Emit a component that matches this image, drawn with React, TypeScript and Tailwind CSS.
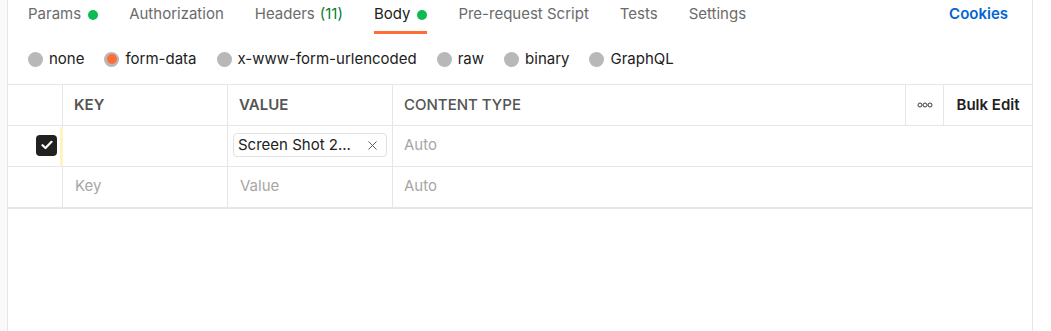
import { X } from "lucide-react";

const tabs = [
  { label: "Params", dot: true },
  { label: "Authorization" },
  { label: "Headers", count: "(11)" },
  { label: "Body", dot: true, active: true },
  { label: "Pre-request Script" },
  { label: "Tests" },
  { label: "Settings" },
];

const bodyTypes = ["none", "form-data", "x-www-form-urlencoded", "raw", "binary", "GraphQL"];

const Radio = ({ checked }: { checked?: boolean }) =>
  checked ? (
    <span className="flex h-[15px] w-[15px] items-center justify-center rounded-full bg-[#b8b8b8]">
      <span className="h-[10px] w-[10px] rounded-full bg-[#ff6c37]" />
    </span>
  ) : (
    <span className="h-[15px] w-[15px] rounded-full bg-[#b8b8b8]" />
  );

const MoreDots = () => (
  <svg width="16" height="6" viewBox="0 0 16 6" fill="none" stroke="#3a3a3a" strokeWidth="1">
    <circle cx="3" cy="3" r="2" />
    <circle cx="8" cy="3" r="2" />
    <circle cx="13" cy="3" r="2" />
  </svg>
);

export default function App() {
  return (
    <div className="flex h-[331px] w-[1051px] bg-white text-[15px] text-[#212121]" style={{ fontFamily: "Inter, 'Noto Sans', sans-serif" }}>
      {/* left gutter */}
      <div className="w-2 shrink-0 border-r border-[#e6e6e6] bg-[#f9f9f9]" />

      <div className="flex w-[1025px] shrink-0 flex-col border-r border-[#e6e6e6]">
        {/* Tabs */}
        <div className="flex h-[34px] items-start pl-5 pr-[24px]">
          <div className="flex gap-[31px]">
            {tabs.map((t) => (
              <div key={t.label} className="relative flex h-[34px] items-start pt-[4px]">
                <span className={`leading-5 ${t.active ? "text-[#212121]" : "text-[#6b6b6b]"}`}>{t.label}</span>
                {t.count && <span className="ml-[5px] leading-5 text-[#0a7b33]">{t.count}</span>}
                {t.dot && <span className="ml-[7px] mt-[6px] h-[10px] w-[10px] rounded-full bg-[#0cbb52]" />}
                {t.active && <span className="absolute bottom-0 left-0 right-0 h-[3px] bg-[#ff6c37]" />}
              </div>
            ))}
          </div>
          <span className="ml-auto pt-[4px] font-semibold leading-5 text-[#0265d2]">Cookies</span>
        </div>

        {/* Body types */}
        <div className="flex h-[50px] items-center gap-[20px] pl-5">
          {bodyTypes.map((b) => (
            <label key={b} className="flex items-center gap-[6px]">
              <Radio checked={b === "form-data"} />
              <span className="leading-5">{b}</span>
            </label>
          ))}
        </div>

        {/* Table */}
        <div className="border-t border-b-2 border-[#e6e6e6]">
          <div className="flex h-[41px] border-b border-[#e6e6e6] text-[#545454]">
            <div className="w-[55px] border-r border-[#e6e6e6]" />
            <div className="flex w-[165px] items-center border-r border-[#e6e6e6] pl-[11px] font-semibold">KEY</div>
            <div className="flex w-[165px] items-center border-r border-[#e6e6e6] pl-[11px] font-semibold">VALUE</div>
            <div className="flex flex-1 items-center border-r border-[#e6e6e6] pl-[11px] font-medium">CONTENT TYPE</div>
            <div className="flex w-[38px] items-center justify-center border-r border-[#e6e6e6]">
              <MoreDots />
            </div>
            <div className="flex w-[88px] items-center justify-center font-semibold text-[#212121]">Bulk Edit</div>
          </div>

          <div className="flex h-[41px] border-b border-[#e6e6e6]">
            <div className="flex w-[55px] items-center justify-end border-r border-[#e6e6e6]">
              <span className="mb-[2px] flex h-[21px] w-[21px] items-center justify-center rounded-[4px] bg-[#212121]">
                <svg width="12" height="10" viewBox="0 0 12 10" fill="none" stroke="white" strokeWidth="2.2" strokeLinecap="round" strokeLinejoin="round">
                  <path d="M1.5 5.2 4.5 8 10.5 1.8" />
                </svg>
              </span>
              <span className="ml-[3px] mr-[-1px] h-[39px] w-[3px] bg-[#fff3c4]" />
            </div>
            <div className="w-[165px] border-r border-[#e6e6e6]" />
            <div className="flex w-[165px] items-center border-r border-[#e6e6e6] px-[5px] pb-[2px]">
              <div className="flex h-[24px] w-full items-center justify-between rounded-[4px] border border-[#e0e0e0] pl-[4px] pr-[6px]">
                <span className="leading-5">Screen Shot 2...</span>
                <X size={15} strokeWidth={1.5} className="text-[#555]" />
              </div>
            </div>
            <div className="flex flex-1 items-center pb-[2px] pl-[11px] text-[#a6a6a6]">Auto</div>
          </div>

          <div className="flex h-[40px] text-[#a6a6a6]">
            <div className="w-[55px] border-r border-[#e6e6e6]" />
            <div className="flex w-[165px] items-center border-r border-[#e6e6e6] pb-[2px] pl-[12px]">Key</div>
            <div className="flex w-[165px] items-center border-r border-[#e6e6e6] pb-[2px] pl-[12px]">Value</div>
            <div className="flex flex-1 items-center pb-[2px] pl-[11px]">Auto</div>
          </div>
        </div>
      </div>
    </div>
  );
}
